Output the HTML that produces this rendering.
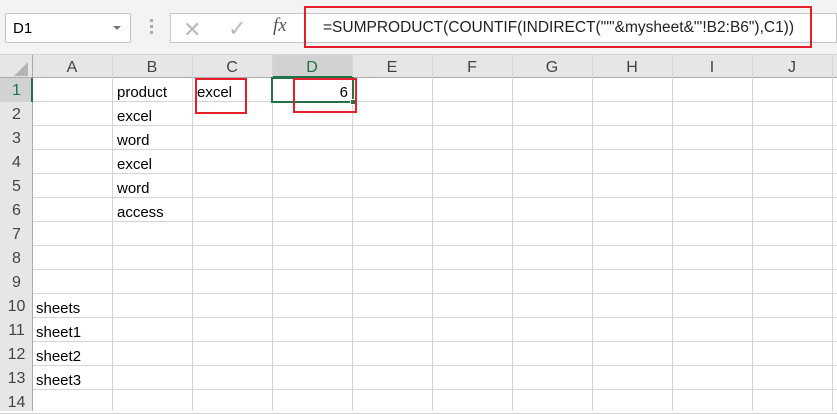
<!DOCTYPE html>
<html><head><style>
body{margin:0;width:837px;height:411px;overflow:hidden;background:#fff;font-family:"Liberation Sans",Arial,sans-serif;position:relative}
.a{position:absolute;box-sizing:border-box}
.t{font-size:15px;color:#000;white-space:nowrap}
</style></head><body>
<div class="a" style="left:0;top:0;width:837px;height:55px;background:#f3f3f3;border-bottom:1px solid #d4d4d4"></div>
<div class="a" style="left:5px;top:13px;width:126px;height:30px;background:#fff;border:1px solid #c6c6c6"></div>
<div class="a t" style="left:13px;top:20px;font-size:15px">D1</div>
<div class="a" style="left:113px;top:26px;width:0;height:0;border-left:4px solid transparent;border-right:4px solid transparent;border-top:4px solid #777"></div>
<div class="a" style="left:150px;top:19px;width:3px;height:3px;background:#aaa;box-shadow:0 6px #aaa,0 12px #aaa"></div>
<div class="a" style="left:170px;top:13px;width:667px;height:30px;background:#fff;border:1px solid #c6c6c6"></div>
<div class="a" style="left:183px;top:17px;color:#bbb;font-size:22px">✕</div>
<div class="a" style="left:228px;top:16px;color:#bbb;font-size:22px">✓</div>
<div class="a" style="left:273px;top:15px;color:#555;font-size:19px;font-style:italic;font-family:'Liberation Serif',serif">fx</div>
<div class="a" style="left:304px;top:6px;width:508px;height:42px;border:2px solid #e5202a"></div>
<div class="a t" style="left:323px;top:19px;font-size:15.5px;color:#222">=SUMPRODUCT(COUNTIF(INDIRECT("'"&amp;mysheet&amp;"'!B2:B6"),C1))</div>
<div class="a" style="left:0;top:55px;width:837px;height:23px;background:#e6e6e6;border-bottom:1px solid #ababab"></div>
<div class="a" style="left:272px;top:55px;width:80px;height:23px;background:#d2d2d2;border-bottom:2px solid #217346"></div>
<div class="a" style="left:14px;top:62px;width:0;height:0;border-left:14px solid transparent;border-bottom:14px solid #b4b4b4"></div>
<div id="g"></div>
<div class="a" style="left:0;top:78px;width:33px;height:333px;background:#e6e6e6;border-right:1px solid #ababab"></div>
<div class="a" style="left:0;top:78px;width:33px;height:24px;background:#d2d2d2;border-right:2px solid #217346"></div>
<script>
let h='';
const cols='ABCDEFGHIJ';
for(let i=0;i<10;i++){let x=32+i*80;
h+=`<div class="a" style="left:${x+80}px;top:55px;width:1px;height:356px;background:#d4d4d4"></div>`;
h+=`<div class="a t" style="left:${x}px;top:59px;width:80px;text-align:center;font-size:16px;color:${i==3?'#217346':'#444'}">${cols[i]}</div>`;}
h+=`<div class="a" style="left:32px;top:55px;width:1px;height:23px;background:#ababab"></div>`;
for(let r=1;r<=14;r++){let y=78+(r-1)*24;
h+=`<div class="a" style="left:0;top:${y+23}px;width:837px;height:1px;background:#d4d4d4"></div>`;
h+=`<div class="a t" style="left:0;top:${y+4}px;width:33px;text-align:center;font-size:16px;z-index:2;color:${r==1?'#217346':'#444'}">${r}</div>`;}
const cells=[[117,1,'product'],[117,2,'excel'],[117,3,'word'],[117,4,'excel'],[117,5,'word'],[117,6,'access'],[197,1,'excel'],[36,10,'sheets'],[36,11,'sheet1'],[36,12,'sheet2'],[36,13,'sheet3']];
for(const [x,r,s] of cells)h+=`<div class="a t" style="left:${x}px;top:${78+(r-1)*24+6}px">${s}</div>`;
h+=`<div class="a t" style="left:272px;top:84px;width:76px;text-align:right">6</div>`;
h+=`<div class="a" style="left:271px;top:77px;width:83px;height:26px;border:2px solid #217346"></div>`;
h+=`<div class="a" style="left:350px;top:99px;width:6px;height:6px;background:#217346;border:1px solid #fff"></div>`;
h+=`<div class="a" style="left:195px;top:78px;width:52px;height:36px;border:2px solid #e5202a"></div>`;
h+=`<div class="a" style="left:293px;top:78px;width:64px;height:35px;border:2px solid #e5202a"></div>`;
document.getElementById('g').innerHTML=h;
</script>
</body></html>
